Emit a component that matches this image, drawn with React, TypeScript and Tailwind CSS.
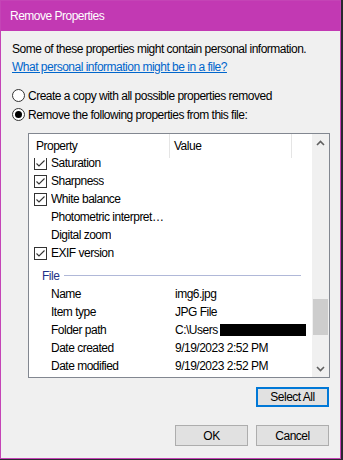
import React from "react";

type PropRow = { label: string; checked: boolean | null };

const PROPS: PropRow[] = [
  { label: "Saturation", checked: true },
  { label: "Sharpness", checked: true },
  { label: "White balance", checked: true },
  { label: "Photometric interpret…", checked: null },
  { label: "Digital zoom", checked: null },
  { label: "EXIF version", checked: true },
];

const FILE_ROWS: { label: string; value: string; redacted?: boolean }[] = [
  { label: "Name", value: "img6.jpg" },
  { label: "Item type", value: "JPG File" },
  { label: "Folder path", value: "C:\\Users", redacted: true },
  { label: "Date created", value: "9/19/2023 2:52 PM" },
  { label: "Date modified", value: "9/19/2023 2:52 PM" },
];

function Checkbox() {
  return (
    <span className="flex h-[13px] w-[13px] shrink-0 items-center justify-center border border-[#333] bg-white">
      <svg width="11" height="11" viewBox="0 0 11 11">
        <path d="M1.5 5.5 L4 8 L9.5 2.5" fill="none" stroke="#333" strokeWidth="1.1" />
      </svg>
    </span>
  );
}

function Radio({ selected }: { selected?: boolean }) {
  return (
    <span className="flex h-[13px] w-[13px] shrink-0 items-center justify-center rounded-full border border-[#333] bg-white">
      {selected && <span className="h-[7px] w-[7px] rounded-full bg-black" />}
    </span>
  );
}

function Chevron({ up }: { up?: boolean }) {
  return (
    <svg width="9" height="6" viewBox="0 0 9 6" className={up ? "" : "rotate-180"}>
      <path d="M1 5 L4.5 1.5 L8 5" fill="none" stroke="#606060" strokeWidth="1.6" />
    </svg>
  );
}

export default function App() {
  return (
    <div className="h-[460px] w-[343px] bg-[#2b2830] text-[12px] tracking-[-0.5px] text-black font-['Liberation_Sans',Arial,sans-serif]">
      <div className="flex h-[459px] w-[341px] flex-col border border-[#c444b6] bg-[#f0f0f0]">
        {/* title bar */}
        <div className="flex h-[30px] shrink-0 items-center bg-[#c239b3] pl-[9px] text-white">
          Remove Properties
        </div>

        <div className="flex flex-col pl-[11px] pt-[9px]">
          <p className="leading-[18px]">Some of these properties might contain personal information.</p>
          <a className="self-start leading-[18px] text-[#0066cc] underline">What personal information might be in a file?</a>

          <div className="mt-[10px] flex h-[19px] items-center gap-[3px]">
            <Radio />
            <span>Create a copy with all possible properties removed</span>
          </div>
          <div className="flex h-[19px] items-center gap-[3px]">
            <Radio selected />
            <span>Remove the following properties from this file:</span>
          </div>
        </div>

        {/* property list */}
        <div className="ml-[27px] mr-[10px] mt-[9px] flex h-[245px] border border-[#828790] bg-white">
          <div className="flex min-w-0 flex-1 flex-col">
            <div className="flex h-[24px] shrink-0 items-center">
              <div className="flex h-full w-[141px] items-center border-r border-[#e5e5e5] pl-[7px]">Property</div>
              <div className="flex h-full w-[122px] items-center border-r border-[#e5e5e5] pl-[4px]">Value</div>
            </div>
            <div className="flex-1 overflow-hidden">
              <div className="-mt-[4px]">
                {PROPS.map((r) => (
                  <div key={r.label} className="flex h-[18px] items-center pl-[5px]">
                    <span className="flex w-[17px] shrink-0">{r.checked && <Checkbox />}</span>
                    <span className="truncate">{r.label}</span>
                  </div>
                ))}
                <div className="flex h-[23px] items-center gap-[5px] pl-[13px] pt-[4px]">
                  <span className="text-[#1e3287]">File</span>
                  <span className="mr-[11px] h-px flex-1 bg-[#b0b8d8]" />
                </div>
                {FILE_ROWS.map((r) => (
                  <div key={r.label} className="flex h-[18px] items-center">
                    <span className="w-[146px] shrink-0 pl-[22px]">{r.label}</span>
                    <span className="flex items-center">
                      {r.value}
                      {r.redacted && <span className="ml-[2px] inline-block h-[12px] w-[86px] bg-black" />}
                    </span>
                  </div>
                ))}
              </div>
            </div>
          </div>

          {/* scrollbar */}
          <div className="flex w-[17px] shrink-0 flex-col bg-[#f0f0f0]">
            <div className="flex h-[17px] items-center justify-center">
              <Chevron up />
            </div>
            <div className="flex-1 px-[1px] pt-[148px]">
              <div className="h-[36px] bg-[#cdcdcd]" />
            </div>
            <div className="flex h-[17px] items-center justify-center">
              <Chevron />
            </div>
          </div>
        </div>

        <div className="mr-[11px] mt-[9px] flex justify-end">
          <button className="h-[20px] w-[73px] border-2 border-[#0078d7] bg-[#e1e1e1] leading-none">Select All</button>
        </div>

        <div className="mr-[11px] mt-[18px] flex justify-end gap-[8px]">
          <button className="h-[21px] w-[73px] border border-[#adadad] bg-[#e1e1e1] leading-none">OK</button>
          <button className="h-[21px] w-[73px] border border-[#adadad] bg-[#e1e1e1] leading-none">Cancel</button>
        </div>
      </div>
    </div>
  );
}
